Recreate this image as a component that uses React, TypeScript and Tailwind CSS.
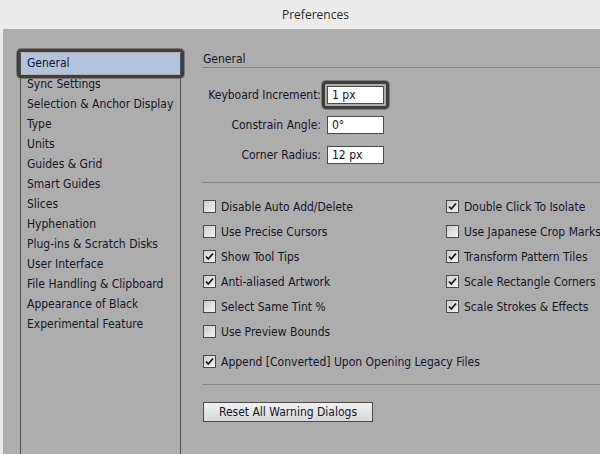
const font = { fontFamily: '"DejaVu Sans Condensed", "DejaVu Sans", "Liberation Sans", sans-serif' };

const categories = [
  "General",
  "Sync Settings",
  "Selection & Anchor Display",
  "Type",
  "Units",
  "Guides & Grid",
  "Smart Guides",
  "Slices",
  "Hyphenation",
  "Plug-ins & Scratch Disks",
  "User Interface",
  "File Handling & Clipboard",
  "Appearance of Black",
  "Experimental Feature",
];

const leftChecks = [
  { label: "Disable Auto Add/Delete", on: false },
  { label: "Use Precise Cursors", on: false },
  { label: "Show Tool Tips", on: true },
  { label: "Anti-aliased Artwork", on: true },
  { label: "Select Same Tint %", on: false },
  { label: "Use Preview Bounds", on: false },
];

const rightChecks = [
  { label: "Double Click To Isolate", on: true },
  { label: "Use Japanese Crop Marks", on: false },
  { label: "Transform Pattern Tiles", on: true },
  { label: "Scale Rectangle Corners", on: true },
  { label: "Scale Strokes & Effects", on: true },
];

const Checkbox = ({ label, on }: { label: string; on: boolean }) => (
  <div className="flex items-center h-[25px] gap-[5px] whitespace-nowrap">
    <div className="w-[13px] h-[13px] border border-[#4a4a4a] bg-gradient-to-br from-[#cdcdcd] to-[#f4f4f4] flex items-center justify-center shrink-0">
      {on && (
        <svg width="11" height="11" viewBox="0 0 11 11">
          <path d="M2 5.5 L4.3 8 L9 2.5" fill="none" stroke="#1a1a1a" strokeWidth="1.8" />
        </svg>
      )}
    </div>
    <span>{label}</span>
  </div>
);

const Field = ({ label, value, focused }: { label: string; value: string; focused?: boolean }) => (
  <div className="flex items-center h-[18px]">
    <span className="w-[120px] text-right pr-[1px] whitespace-nowrap">{label}</span>
    <div className="relative ml-[5px]">
      {focused && (
        <div className="absolute -inset-[5px] rounded-[4px] border-[3px] border-[#3e3e3e] shadow-[0_0_0_1px_#7a7a7a]" />
      )}
      <div className="w-[57px] h-[18px] bg-white border border-[#4a4a4a] pl-[4px] leading-[16px]">{value}</div>
    </div>
  </div>
);

export default function App() {
  return (
    <div className="w-[600px] h-[454px] overflow-hidden flex flex-col bg-[#ebebeb] text-[12px] text-[#15152a]" style={font}>
      <div className="h-[29px] shrink-0 flex items-center pl-[282px] text-[12px] text-[#2b2b2b]" style={{ fontFamily: '"Open Sans", "Noto Sans", sans-serif' }}>
        Preferences
      </div>
      <div className="flex-1 flex ml-[3px] bg-[#adadad] min-h-0">
        {/* category list */}
        <div className="ml-[17px] mt-[24px] w-[161px] shrink-0 border-x border-[#4f4f4f] flex flex-col">
          {categories.map((c, i) =>
            i === 0 ? (
              <div key={c} className="relative h-[21px] leading-[21px] pl-[6px] bg-[#b3c3dd]">
                <div className="absolute -inset-y-[4px] -left-[4px] -right-[4px] rounded-[4px] border-[3px] border-[#3e3e3e] shadow-[0_0_0_1px_#7a7a7a]" />
                {c}
              </div>
            ) : (
              <div key={c} className="h-[20px] leading-[20px] pl-[6px] whitespace-nowrap">
                {c}
              </div>
            )
          )}
        </div>

        {/* settings */}
        <div className="flex-1 ml-[21px] flex flex-col min-w-0">
          <div className="mt-[22px] pl-[1px] h-[16px] leading-[16px]">General</div>
          <div className="h-px bg-[#858585]" />

          <div className="flex flex-col gap-[12px] mt-[18px]">
            <Field label="Keyboard Increment:" value="1 px" focused />
            <Field label="Constrain Angle:" value="0°" />
            <Field label="Corner Radius:" value="12 px" />
          </div>

          <div className="h-px bg-[#858585] mt-[18px]" />

          <div className="flex mt-[11px] pl-[1px]">
            <div className="w-[243px] shrink-0 flex flex-col">
              {leftChecks.map((c) => (
                <Checkbox key={c.label} {...c} />
              ))}
            </div>
            <div className="flex flex-col">
              {rightChecks.map((c) => (
                <Checkbox key={c.label} {...c} />
              ))}
            </div>
          </div>
          <div className="mt-[5px] pl-[1px]">
            <Checkbox label="Append [Converted] Upon Opening Legacy Files" on />
          </div>

          <div className="h-px bg-[#858585] mt-[10px]" />

          <button className="mt-[17px] ml-[1px] w-[170px] h-[20px] border border-[#4a4a4a] bg-gradient-to-b from-[#f0f0f0] to-[#d9d9d9] text-[12px] leading-[18px] text-[#15152a]" style={font}>
            Reset All Warning Dialogs
          </button>
        </div>
      </div>
    </div>
  );
}
